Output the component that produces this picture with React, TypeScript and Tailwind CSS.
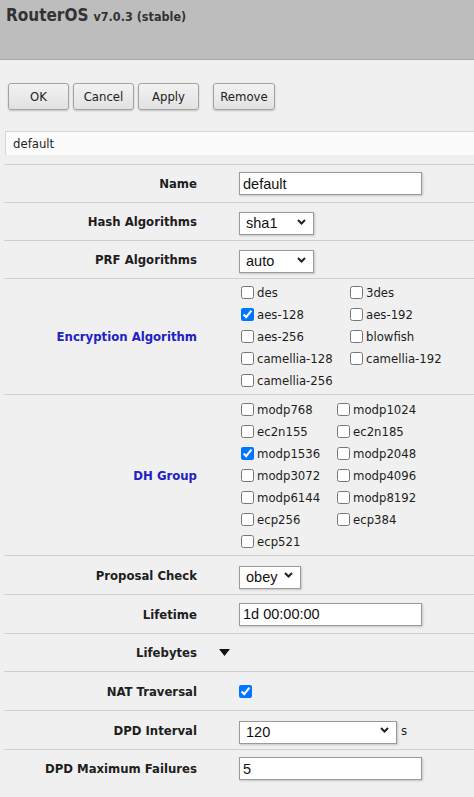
import React from "react";

const labelFont = { fontFamily: '"DejaVu Sans", "Liberation Sans", sans-serif', fontStretch: "condensed" } as const;
const inputFont = { fontFamily: '"Liberation Sans", Arial, sans-serif' } as const;

function Chevron() {
  return (
    <svg width="9" height="6" viewBox="0 0 9 6" className="pointer-events-none absolute right-[8px] top-1/2 -translate-y-1/2">
      <path d="M1 1 L4.5 4.5 L8 1" fill="none" stroke="#222" strokeWidth="2" />
    </svg>
  );
}

function Select({ value, width }: { value: string; width: string }) {
  return (
    <div className={`relative h-[23px] ${width}`}>
      <select
        defaultValue={value}
        style={inputFont}
        className="h-full w-full appearance-none border border-[#9a9a9a] bg-white pl-[6px] text-[14.5px] text-[#111] shadow-[1px_1px_2px_rgba(0,0,0,0.18)] outline-none"
      >
        <option>{value}</option>
      </select>
      <Chevron />
    </div>
  );
}

function TextInput({ value }: { value: string }) {
  return (
    <input
      defaultValue={value}
      style={inputFont}
      className="h-[23px] w-[183px] border border-[#9a9a9a] bg-white px-[3px] text-[14.5px] text-[#111] shadow-[1px_1px_2px_rgba(0,0,0,0.18)] outline-none"
    />
  );
}

function Row({
  label,
  h,
  blue,
  last,
  children,
}: {
  label: string;
  h: string;
  blue?: boolean;
  last?: boolean;
  children?: React.ReactNode;
}) {
  return (
    <div className={`flex items-center border-t border-[#d0d0d0] ${h}`}>
      <div
        style={labelFont}
        className={`w-[193px] shrink-0 text-right text-[13px] font-bold ${blue ? "text-[#2121c4]" : "text-[#1e1e1e]"}`}
      >
        {label}
      </div>
      <div className={`ml-[42px] flex items-center ${last ? "" : ""}`}>{children}</div>
    </div>
  );
}

function CheckGrid({ items, checked, col }: { items: string[]; checked: string[]; col: string }) {
  return (
    <div className={`grid ${col} py-[3px]`}>
      {items.map((it) => (
        <label key={it} className="flex h-[22px] items-center">
          <input
            type="checkbox"
            defaultChecked={checked.includes(it)}
            className="ml-[2px] h-[13px] w-[13px]"
          />
          <span style={labelFont} className="ml-[3px] text-[13px] text-[#1e1e1e]">
            {it}
          </span>
        </label>
      ))}
    </div>
  );
}

function Btn({ children, w }: { children: React.ReactNode; w: string }) {
  return (
    <button
      style={labelFont}
      className={`h-[27px] ${w} rounded-[3px] border border-[#a3a3a3] bg-gradient-to-b from-[#f2f2f2] to-[#e2e2e2] text-[13px] text-[#222] shadow-[0_1px_2px_rgba(0,0,0,0.2)]`}
    >
      {children}
    </button>
  );
}

export default function App() {
  return (
    <div className="min-h-[797px] bg-[#f0f0f0]">
      <div className="h-[60px] border-b border-[#a6a6a6] bg-[#bdbdbd] px-[6px] pt-[3px]">
        <div style={labelFont} className="flex items-baseline gap-[5px] font-bold text-[#333]">
          <span className="text-[17px]">RouterOS</span>
          <span className="text-[12.5px]">v7.0.3 (stable)</span>
        </div>
      </div>

      <div className="mt-[23px] flex pl-[8px]">
        <Btn w="w-[61px]">OK</Btn>
        <div className="ml-[4px]">
          <Btn w="w-[61px]">Cancel</Btn>
        </div>
        <div className="ml-[4px]">
          <Btn w="w-[61px]">Apply</Btn>
        </div>
        <div className="ml-[14px]">
          <Btn w="w-[62px]">Remove</Btn>
        </div>
      </div>

      <div
        style={labelFont}
        className="ml-[5px] mt-[21px] flex h-[24px] items-center border-l border-t border-[#d6d6d6] bg-[#fbfbfb] pl-[7px] text-[13px] text-[#1e1e1e]"
      >
        default
      </div>

      <div className="ml-[4px] mt-[9px]">
        <Row label="Name" h="h-[38px]">
          <TextInput value="default" />
        </Row>
        <Row label="Hash Algorithms" h="h-[38px]">
          <Select value="sha1" width="w-[75px]" />
        </Row>
        <Row label="PRF Algorithms" h="h-[38px]">
          <Select value="auto" width="w-[75px]" />
        </Row>
        <Row label="Encryption Algorithm" h="h-[116px]" blue>
          <CheckGrid
            col="grid-cols-[109px_auto]"
            items={["des", "3des", "aes-128", "aes-192", "aes-256", "blowfish", "camellia-128", "camellia-192", "camellia-256"]}
            checked={["aes-128"]}
          />
        </Row>
        <Row label="DH Group" h="h-[161px]" blue>
          <CheckGrid
            col="grid-cols-[96px_auto]"
            items={[
              "modp768",
              "modp1024",
              "ec2n155",
              "ec2n185",
              "modp1536",
              "modp2048",
              "modp3072",
              "modp4096",
              "modp6144",
              "modp8192",
              "ecp256",
              "ecp384",
              "ecp521",
            ]}
            checked={["modp1536"]}
          />
        </Row>
        <Row label="Proposal Check" h="h-[39px]">
          <Select value="obey" width="w-[62px]" />
        </Row>
        <Row label="Lifetime" h="h-[39px]">
          <TextInput value="1d 00:00:00" />
        </Row>
        <Row label="Lifebytes" h="h-[38px]">
          <svg width="11" height="7" viewBox="0 0 11 7" className="-ml-[20px]">
            <path d="M0 0 L11 0 L5.5 7 Z" fill="#111" />
          </svg>
        </Row>
        <Row label="NAT Traversal" h="h-[39px]">
          <input type="checkbox" defaultChecked className="h-[13px] w-[13px]" />
        </Row>
        <Row label="DPD Interval" h="h-[39px]">
          <Select value="120" width="w-[158px]" />
          <span style={labelFont} className="ml-[4px] text-[13px] text-[#1e1e1e]">
            s
          </span>
        </Row>
        <Row label="DPD Maximum Failures" h="h-[38px]" last>
          <TextInput value="5" />
        </Row>
      </div>
    </div>
  );
}
